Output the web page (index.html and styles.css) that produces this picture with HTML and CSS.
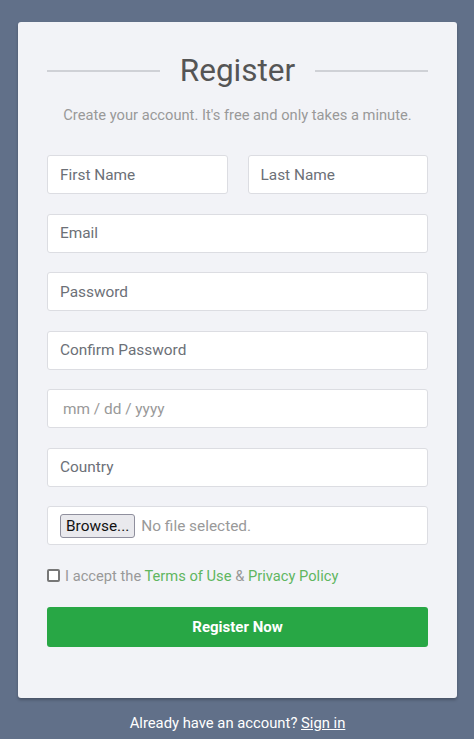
FILE: index.html
```html
<!DOCTYPE html>
<html lang="en">
<head>
<meta charset="utf-8">
<title>Register</title>
<link rel="stylesheet" href="styles.css">
</head>
<body>
<main class="page">
  <section class="card">
    <div class="title-row">
      <span class="rule"></span>
      <h2 class="title">Register</h2>
      <span class="rule"></span>
    </div>
    <p class="subtitle">Create your account. It's free and only takes a minute.</p>
    <form class="form">
      <div class="pair">
        <input class="field" type="text" placeholder="First Name">
        <input class="field" type="text" placeholder="Last Name">
      </div>
      <input class="field" type="text" placeholder="Email">
      <input class="field" type="text" placeholder="Password">
      <input class="field" type="text" placeholder="Confirm Password">
      <input class="field field-date" type="text" placeholder="mm / dd / yyyy">
      <input class="field" type="text" placeholder="Country">
      <div class="field file">
        <span class="browse">Browse...</span>
        <span class="nofile">No file selected.</span>
      </div>
      <label class="accept">
        <span class="box"></span>
        <span>I accept the <a href="#" class="link">Terms of Use</a> &amp; <a href="#" class="link">Privacy Policy</a></span>
      </label>
      <button type="button" class="submit">Register Now</button>
    </form>
  </section>
  <p class="footer">Already have an account? <a href="#" class="signin">Sign in</a></p>
</main>
</body>
</html>
```
FILE: styles.css
```css
* { box-sizing: border-box; }
html, body { margin: 0; padding: 0; }
body {
  background: #617089;
  font-family: Roboto, "Liberation Sans", sans-serif;
  width: 474px;
  height: 739px;
  overflow: hidden;
}
.page {
  padding: 22px 17px 0 18px;
}
.card {
  width: 439px;
  background: #f2f3f7;
  border-radius: 3px;
  box-shadow: 0 2px 3px rgba(0,0,0,0.25);
  padding: 30px 29px 51px 29px;
}
.title-row {
  display: flex;
  align-items: center;
  gap: 20px;
  height: 37px;
}
.rule {
  flex: 1;
  height: 2px;
  background: #cfd1d6;
}
.title {
  margin: 0;
  font-size: 31.5px;
  font-weight: 400;
  color: #555;
  line-height: 37px;
}
.subtitle {
  margin: 16px 0 0;
  text-align: center;
  font-size: 14.7px;
  line-height: 20px;
  color: #999;
}
.form {
  margin-top: 30px;
  display: flex;
  flex-direction: column;
  gap: 19.5px;
}
.pair {
  display: flex;
  gap: 20px;
}
.pair .field { flex: 1; min-width: 0; }
.field {
  display: block;
  width: 100%;
  height: 39px;
  border: 1px solid #dcdde2;
  border-radius: 3px;
  background: #fff;
  padding: 0 12px;
  font-family: Roboto, "Liberation Sans", sans-serif;
  font-size: 15.4px;
  color: #555;
  outline: none;
}
.field::placeholder { color: #6c7077; opacity: 1; }
.field-date { padding-left: 15px; }
.field-date::placeholder { color: #999; }
.file {
  display: flex;
  align-items: center;
  gap: 6px;
}
.browse {
  display: inline-block;
  height: 24px;
  line-height: 22px;
  padding: 0 5px;
  border: 1px solid #8f8f9d;
  border-radius: 3px;
  background: #e9e9ed;
  color: #111;
  font-size: 15.4px;
}
.nofile {
  color: #999;
  font-size: 15.4px;
}
.accept {
  display: flex;
  align-items: center;
  gap: 5px;
  margin-top: 1px;
  font-size: 14.7px;
  color: #999;
  height: 20px;
}
.box {
  width: 13px;
  height: 13px;
  border: 2px solid #777;
  border-radius: 2px;
  background: #fff;
}
.link { color: #5fb660; text-decoration: none; }
.submit {
  margin-top: 2px;
  height: 40px;
  width: 100%;
  border: none;
  border-radius: 3px;
  background: #28a745;
  color: #fff;
  font-family: Roboto, "Liberation Sans", sans-serif;
  font-weight: 700;
  font-size: 15px;
}
.footer {
  margin: 15px 0 0;
  text-align: center;
  color: #fff;
  font-size: 14.8px;
  line-height: 20px;
}
.signin { color: #fff; text-decoration: underline; }
```
